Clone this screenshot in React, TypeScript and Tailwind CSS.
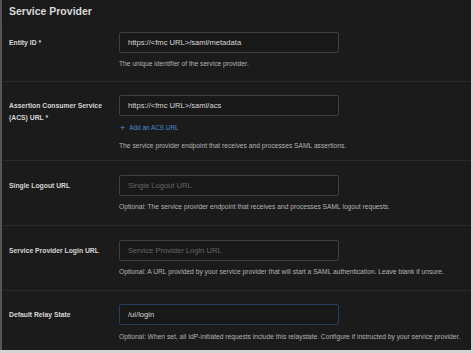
import React from 'react';

type Field = {
    label: string[];
    value?: string;
    placeholder?: string;
    help: string;
    focused?: boolean;
    addLink?: boolean;
    pad: string;
};

const fields: Field[] = [
    {
        label: ['Entity ID *'],
        value: 'https://<fmc URL>/saml/metadata',
        help: 'The unique identifier of the service provider.',
        pad: 'pt-[7px] pb-[13px]',
    },
    {
        label: ['Assertion Consumer Service', '(ACS) URL *'],
        value: 'https://<fmc URL>/saml/acs',
        help: 'The service provider endpoint that receives and processes SAML assertions.',
        addLink: true,
        pad: 'pt-[13px] pb-[10px]',
    },
    {
        label: ['Single Logout URL'],
        placeholder: 'Single Logout URL',
        help: 'Optional: The service provider endpoint that receives and processes SAML logout requests.',
        pad: 'pt-[14px] pb-[14px]',
    },
    {
        label: ['Service Provider Login URL'],
        placeholder: 'Service Provider Login URL',
        help: 'Optional: A URL provided by your service provider that will start a SAML authentication. Leave blank if unsure.',
        pad: 'pt-[14px] pb-[14px]',
    },
    {
        label: ['Default Relay State'],
        value: '/ui/login',
        help: 'Optional: When set, all IdP-initiated requests include this relaystate. Configure if instructed by your service provider.',
        focused: true,
        pad: 'pt-[13px] pb-[6px]',
    },
];

const FieldRow = ({ field, last }: { field: Field; last: boolean }) => (
    <div className={`flex pl-[7px] ${field.pad} ${last ? '' : 'border-b border-[#2a2a2a]'}`}>
        <div className="w-[110px] shrink-0 pt-[5px] text-[6.8px] leading-[12px] font-bold text-[#d6d6d6]">
            {field.label.map((l) => (
                <div key={l}>{l}</div>
            ))}
        </div>
        <div className="flex flex-col">
            <div
                className={`w-[220px] h-[21px] flex items-center px-[8px] rounded-[2px] border text-[7.6px] bg-[#181818] ${
                    field.focused ? 'border-[#24405f]' : 'border-[#3f3f3f]'
                }`}
            >
                {field.value ? (
                    <span className="text-[#d8d8d8]">{field.value}</span>
                ) : (
                    <span className="text-[#666666]">{field.placeholder}</span>
                )}
            </div>
            {field.addLink && (
                <div className="mt-[7px] h-[10px] flex items-center gap-[4px] pl-[1px] text-[6.4px] text-[#4a8ad0]">
                    <span className="text-[9px] leading-none">+</span>
                    <span>Add an ACS URL</span>
                </div>
            )}
            <div
                className={`${field.addLink ? 'mt-[8px]' : field.focused ? 'mt-[7px]' : 'mt-[6px]'} text-[6.7px] leading-[9px] whitespace-nowrap text-[#b4b4b4]`}
            >
                {field.help}
            </div>
        </div>
    </div>
);

export default function App() {
    return (
        <div
            className="w-[474px] h-[353px] bg-[#d4d4d4] overflow-hidden"
            style={{ fontFamily: '"Liberation Sans", Arial, sans-serif' }}
        >
            <div className="w-[471px] h-[350px] flex">
                <div className="w-[2px] bg-[#555555]" />
                <div className="flex-1 bg-[#1b1b1b] flex flex-col">
                    <div className="h-[25px] pl-[7px] pt-[4px] text-[10.5px] font-bold text-[#d9d9d9] bg-[#1a1a1a]">
                        Service Provider
                    </div>
                    {fields.map((f, i) => (
                        <FieldRow key={f.label[0]} field={f} last={i === fields.length - 1} />
                    ))}
                </div>
            </div>
        </div>
    );
}
